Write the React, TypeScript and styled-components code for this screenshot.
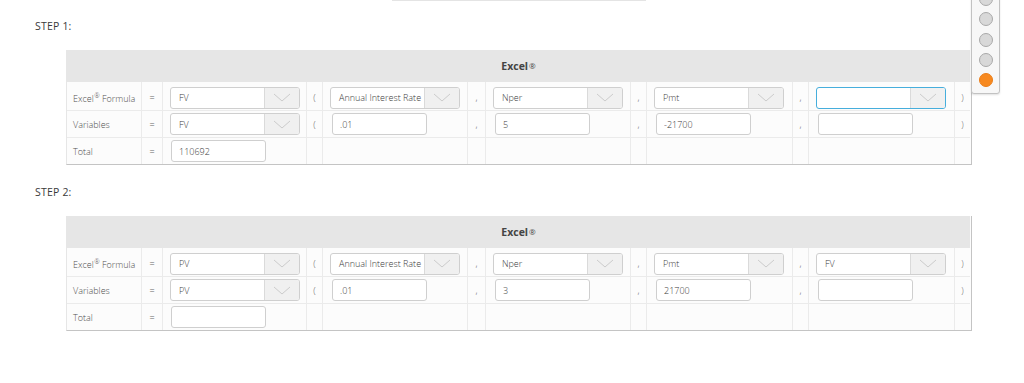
import styled, { createGlobalStyle, css } from "styled-components";

const GlobalStyle = createGlobalStyle`
  html, body {
    margin: 0;
    padding: 0;
    background: #ffffff;
    font-family: "Open Sans", "Liberation Sans", sans-serif;
    color: #333333;
  }
`;

type Arg = { kind: "select" | "input"; value: string; focused?: boolean };

type StepData = {
  title: string;
  formula: Arg[];
  variables: Arg[];
  total: string;
};

const steps: StepData[] = [
  {
    title: "STEP 1:",
    formula: [
      { kind: "select", value: "FV" },
      { kind: "select", value: "Annual Interest Rate" },
      { kind: "select", value: "Nper" },
      { kind: "select", value: "Pmt" },
      { kind: "select", value: "", focused: true },
    ],
    variables: [
      { kind: "select", value: "FV" },
      { kind: "input", value: ".01" },
      { kind: "input", value: "5" },
      { kind: "input", value: "-21700" },
      { kind: "input", value: "" },
    ],
    total: "110692",
  },
  {
    title: "STEP 2:",
    formula: [
      { kind: "select", value: "PV" },
      { kind: "select", value: "Annual Interest Rate" },
      { kind: "select", value: "Nper" },
      { kind: "select", value: "Pmt" },
      { kind: "select", value: "FV" },
    ],
    variables: [
      { kind: "select", value: "PV" },
      { kind: "input", value: ".01" },
      { kind: "input", value: "3" },
      { kind: "input", value: "21700" },
      { kind: "input", value: "" },
    ],
    total: "",
  },
];

const separators = ["(", ",", ",", ",", ")"];

const Chevron = () => (
  <svg width="18" height="9" viewBox="0 0 18 9" fill="none">
    <path d="M1 1 L9 8 L17 1" stroke="#cbcbcb" strokeWidth="1" />
  </svg>
);

const FakeSelect = ({ value, focused }: { value: string; focused?: boolean }) => (
  <SelectBox $focused={focused}>
    <SelectText>{value}</SelectText>
    <SelectArrow>
      <Chevron />
    </SelectArrow>
  </SelectBox>
);

const ArgCell = ({ arg, first }: { arg: Arg; first?: boolean }) => (
  <Cell $kind="field" $first={first}>
    {arg.kind === "select" ? (
      <FakeSelect value={arg.value} focused={arg.focused} />
    ) : (
      <TextBox readOnly value={arg.value} />
    )}
  </Cell>
);

const Row = ({ label, args, first }: { label: React.ReactNode; args: Arg[]; first?: boolean }) => (
  <>
    <Cell $kind="label" $first={first}>
      <span>{label}</span>
    </Cell>
    <Cell $kind="sign" $first={first}>=</Cell>
    {args.map((arg, i) => (
      <Group key={i}>
        {i > 0 && <Cell $kind="sign" $first={first}>{separators[i - 1]}</Cell>}
        <ArgCell arg={arg} first={first} />
      </Group>
    ))}
    <Cell $kind="sign" $first={first} $last>)</Cell>
  </>
);

const ExcelTable = ({ step }: { step: StepData }) => (
  <Table>
    <Header>
      Excel<Sup>®</Sup>
    </Header>
    <Row
      first
      label={
        <>
          Excel<SmallSup>®</SmallSup> Formula
        </>
      }
      args={step.formula}
    />
    <Row label="Variables" args={step.variables} />
    <Cell $kind="label" $short>Total</Cell>
    <Cell $kind="sign" $short>=</Cell>
    <Cell $kind="field" $short>
      <TotalBox readOnly value={step.total} />
    </Cell>
    {Array.from({ length: 9 }).map((_, i) => (
      <Cell key={i} $kind="sign" $short $last={i === 8} />
    ))}
  </Table>
);

const App = () => (
  <>
    <GlobalStyle />
    <Page>
      <TopRule />
      {steps.map((step, i) => (
        <Section key={step.title} $gap={i === 0 ? 18 : 20}>
          <StepTitle>{step.title}</StepTitle>
          <ExcelTable step={step} />
        </Section>
      ))}
    </Page>
    <Progress>
      <Dot />
      <Dot />
      <Dot />
      <Dot />
      <Dot $active />
    </Progress>
  </>
);

export default App;

const Page = styled.div`
  width: 1024px;
  min-height: 383px;
  display: flex;
  flex-direction: column;
`;

const TopRule = styled.div`
  width: 254px;
  margin-left: 392px;
  height: 0;
  border-bottom: 1px solid #e4e4e4;
`;

const Section = styled.section<{ $gap: number }>`
  margin-top: ${(p) => p.$gap}px;
  display: flex;
  flex-direction: column;
`;

const StepTitle = styled.div`
  margin-left: 35px;
  margin-bottom: 17px;
  font-size: 10.5px;
  line-height: 14px;
  color: #3a3a3a;
  letter-spacing: 0.2px;
`;

const Table = styled.div`
  margin-left: 66px;
  width: 906px;
  box-sizing: border-box;
  display: grid;
  grid-template-columns: 75px 21px 144px 16px 145px 18px 145px 16px 146px 16px 146px 15px;
  border: 1px solid #e6e6e6;
  border-top: none;
  border-right-color: #c4c4c4;
  border-bottom-color: #c4c4c4;
  background: #fcfcfc;
`;

const Header = styled.div`
  grid-column: 1 / -1;
  height: 32px;
  background: #e6e6e6;
  display: flex;
  align-items: center;
  justify-content: center;
  font-size: 10.5px;
  font-weight: 700;
  color: #444444;
`;

const Sup = styled.sup`
  font-size: 8px;
  font-weight: 400;
  margin-left: 1px;
  position: relative;
  top: -1px;
`;

const SmallSup = styled.sup`
  font-size: 6.5px;
  margin-left: 0.5px;
`;

const Group = styled.div`
  display: contents;
`;

const Cell = styled.div<{
  $kind: "label" | "sign" | "field";
  $first?: boolean;
  $short?: boolean;
  $last?: boolean;
}>`
  box-sizing: border-box;
  height: ${(p) => (p.$first ? 29 : p.$short ? 26 : 27)}px;
  padding-top: ${(p) => (p.$first ? 3 : 0)}px;
  display: flex;
  align-items: center;
  border-right: ${(p) => (p.$last ? "none" : "1px solid #ebebeb")};
  border-bottom: ${(p) => (p.$short ? "none" : "1px solid #ebebeb")};
  font-size: 9px;
  font-weight: 300;
  color: #4f4f4f;
  white-space: nowrap;
  overflow: hidden;

  ${(p) =>
    p.$kind === "label" &&
    css`
      padding-left: 6px;
    `}

  ${(p) =>
    p.$kind === "sign" &&
    css`
      justify-content: center;
      color: #666666;
    `}

  ${(p) =>
    p.$kind === "field" &&
    css`
      padding-left: 7px;
    `}
`;

const SelectBox = styled.div<{ $focused?: boolean }>`
  box-sizing: border-box;
  width: 130px;
  height: 22px;
  display: flex;
  border: 1px solid ${(p) => (p.$focused ? "#46aedc" : "#cfcfcf")};
  border-radius: 3px;
  background: #ffffff;
  overflow: hidden;
`;

const SelectText = styled.div`
  flex: 1;
  display: flex;
  align-items: center;
  padding-left: 8px;
  font-size: 9px;
  font-weight: 300;
  color: #3a3a3a;
`;

const SelectArrow = styled.div`
  width: 34px;
  display: flex;
  align-items: center;
  justify-content: center;
  background: #f0f0f0;
  border-left: 1px solid #dadada;
`;

const TextBox = styled.input`
  box-sizing: border-box;
  width: 95px;
  height: 22px;
  margin-left: 2px;
  padding: 0 0 0 7px;
  border: 1px solid #cfcfcf;
  border-radius: 3px;
  background: #ffffff;
  font-family: "Open Sans", "Liberation Sans", sans-serif;
  font-size: 9px;
  font-weight: 300;
  color: #3a3a3a;
  outline: none;
`;

const TotalBox = styled(TextBox)`
  margin-left: 1px;
`;

const Progress = styled.div`
  position: fixed;
  top: -11px;
  left: 971px;
  width: 29px;
  box-sizing: border-box;
  padding: 2px 0 6px;
  display: flex;
  flex-direction: column;
  align-items: center;
  gap: 6.3px;
  background: #f7f7f7;
  border: 1px solid #c2c2c2;
  border-radius: 0 0 3px 3px;
  box-shadow: 0 1px 2px rgba(0, 0, 0, 0.12);
`;

const Dot = styled.div<{ $active?: boolean }>`
  box-sizing: border-box;
  width: 14px;
  height: 14px;
  border-radius: 50%;
  background: ${(p) => (p.$active ? "#f7891f" : "#d8d8d8")};
  border: 1px solid ${(p) => (p.$active ? "#ea7d18" : "#a9a9a9")};
`;
